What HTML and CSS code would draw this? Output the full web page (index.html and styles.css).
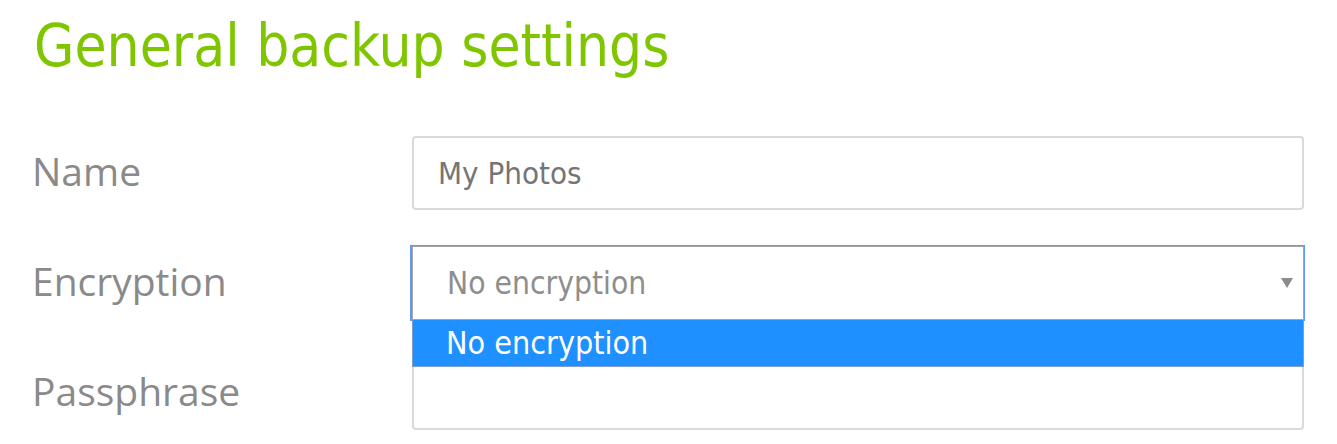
FILE: index.html
```html
<!DOCTYPE html>
<html>
<head>
<meta charset="utf-8">
<link rel="stylesheet" href="styles.css">
</head>
<body>
<h1 class="title">General backup settings</h1>
<div class="form">
  <div class="label">Name</div>
  <div class="field input">My Photos</div>

  <div class="label">Encryption</div>
  <div class="select-wrap">
    <div class="field select">
      <span class="select-text">No encryption</span>
      <svg class="arrow" width="12" height="10" viewBox="0 0 12 10"><polygon points="0,0 12,0 6,10" fill="#8c8c8c"/></svg>
    </div>
    <div class="menu">
      <div class="option">No encryption</div>
    </div>
  </div>

  <div class="label">Passphrase</div>
  <div class="field input"></div>
</div>
</body>
</html>
```

FILE: styles.css
```css
html, body {
  margin: 0;
  padding: 0;
  background: #ffffff;
}

.title {
  margin: 0;
  padding: 11px 0 0 34px;
  font-family: "DejaVu Sans Condensed", "DejaVu Sans", sans-serif;
  font-stretch: condensed;
  font-weight: normal;
  font-size: 58px;
  line-height: 70px;
  color: #80c600;
  height: 124px;
  box-sizing: border-box;
}

.form {
  display: grid;
  grid-template-columns: 412px 892px;
  grid-auto-rows: 74px;
  row-gap: 36px;
  margin-top: 12px;
}

.label {
  padding-left: 32px;
  padding-bottom: 5px;
  box-sizing: border-box;
  display: flex;
  align-items: center;
  font-family: "Open Sans", sans-serif;
  font-size: 39px;
  color: #8a8a8a;
}

.field {
  box-sizing: border-box;
  height: 74px;
  border: 2px solid #dadada;
  border-radius: 4px;
  display: flex;
  align-items: center;
  font-family: "DejaVu Sans Condensed", "DejaVu Sans", sans-serif;
  font-stretch: condensed;
  font-size: 31px;
  color: #757575;
  padding-left: 24px;
  background: #fff;
}

.select-wrap {
  position: relative;
}

.select {
  border: 1px solid #a6a6a6;
  border-radius: 0;
  box-shadow: 0 0 0 1px #5b9af5, -1px 0 0 1px #5b9af5;
  padding-left: 34px;
  padding-right: 10px;
  font-size: 31.5px;
  color: #8e8e8e;
  justify-content: space-between;
}

.arrow {
  display: block;
}

.menu {
  position: absolute;
  left: 0;
  right: 0;
  top: 74px;
  height: 47px;
  box-sizing: border-box;
  background: #1e90ff;
  border: 1px solid #7e9ccc;
  border-top: none;
  z-index: 2;
}

.option {
  height: 46px;
  display: flex;
  align-items: center;
  padding-left: 33px;
  font-family: "DejaVu Sans Condensed", "DejaVu Sans", sans-serif;
  font-stretch: condensed;
  font-size: 32px;
  color: #ffffff;
}
```
